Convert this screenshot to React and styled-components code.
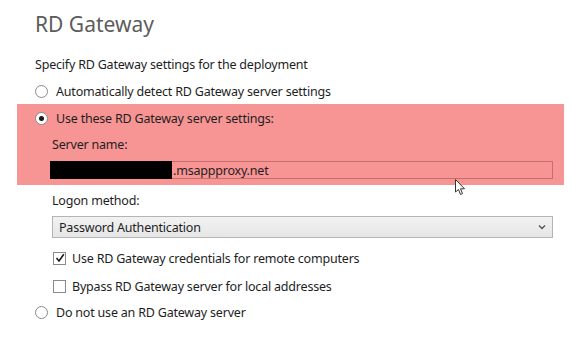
import React from 'react';
import styled, { createGlobalStyle } from 'styled-components';

const GlobalStyle = createGlobalStyle`
    body {
        margin: 0;
        background: #ffffff;
        font-family: "Segoe UI", "Noto Sans", "Open Sans", sans-serif;
        color: #1e1e1e;
    }
`;

const Page = styled.div`
    position: relative;
    width: 571px;
    height: 343px;
    overflow: hidden;
    padding-top: 10px;
    box-sizing: border-box;
`;

const Title = styled.h1`
    margin: 0 0 0 35px;
    height: 28px;
    line-height: 28px;
    font-size: 21px;
    font-weight: 400;
    color: #5c5c5c;
`;

const Text = styled.div`
    margin: ${(p) => p.top || 0}px 0 0 ${(p) => p.left || 0}px;
    height: 20px;
    line-height: 20px;
    font-size: 12.5px;
    letter-spacing: -0.2px;
`;

const Row = styled.label`
    display: flex;
    align-items: center;
    gap: ${(p) => p.gap || 8}px;
    margin: ${(p) => p.top || 0}px 0 0 ${(p) => p.left || 0}px;
    height: 20px;
    font-size: 12.5px;
    letter-spacing: -0.2px;
`;

const Radio = styled.span`
    width: 11px;
    height: 11px;
    border-radius: 50%;
    border: 1px solid #8a8a8a;
    background: #fff;
    display: flex;
    align-items: center;
    justify-content: center;
    flex-shrink: 0;

    &::after {
        content: '';
        width: 5px;
        height: 5px;
        border-radius: 50%;
        background: #1a1a1a;
        display: ${(p) => (p.checked ? 'block' : 'none')};
    }
`;

const Box = styled.span`
    width: 11px;
    height: 11px;
    border: 1px solid #8a8a8a;
    background: #fff;
    display: flex;
    align-items: center;
    justify-content: center;
    flex-shrink: 0;
`;

const Highlight = styled.div`
    margin: 3px 0 0 17px;
    width: 547px;
    padding: 4px 0 6px 18px;
    box-sizing: border-box;
    background: #f79595;
`;

const Input = styled.div`
    position: relative;
    margin: 6px 0 0 15px;
    width: 503px;
    height: 18px;
    box-sizing: border-box;
    border: 1px solid #c56e6e;
    display: flex;
    align-items: center;
    padding-left: 122px;
    font-size: 12.5px;
    letter-spacing: -0.2px;
`;

const Redacted = styled.span`
    position: absolute;
    left: -1px;
    top: -1px;
    width: 122px;
    height: 18px;
    background: #000;
`;

const Select = styled.div`
    margin: 5px 0 0 52px;
    width: 501px;
    height: 22px;
    box-sizing: border-box;
    border: 1px solid #b4b4b4;
    background: linear-gradient(#f2f2f2, #e6e6e6);
    display: flex;
    align-items: center;
    justify-content: space-between;
    padding: 0 6px 0 6px;
    font-size: 12.5px;
    letter-spacing: -0.2px;
`;

const Cursor = styled.svg`
    position: absolute;
    left: 455px;
    top: 179px;
`;

export default function App() {
    return (
        <Page>
            <GlobalStyle />
            <Title>RD Gateway</Title>
            <Text top={17} left={35}>Specify RD Gateway settings for the deployment</Text>
            <Row top={6} left={35}>
                <Radio />
                Automatically detect RD Gateway server settings
            </Row>
            <Highlight>
                <Row>
                    <Radio checked />
                    Use these RD Gateway server settings:
                </Row>
                <Text top={7} left={17}>Server name:</Text>
                <Input>
                    <Redacted />
                    .msappproxy.net
                </Input>
            </Highlight>
            <Text top={6} left={52}>Logon method:</Text>
            <Select>
                Password Authentication
                <svg width="8" height="6" viewBox="0 0 8 6">
                    <path d="M1 1.5 L4 4.5 L7 1.5" fill="none" stroke="#555" strokeWidth="1.4" />
                </svg>
            </Select>
            <Row top={10} left={53} gap={6}>
                <Box>
                    <svg width="10" height="10" viewBox="0 0 10 10">
                        <path d="M1.5 5 L4 8 L8.8 1.2" fill="none" stroke="#1a1a1a" strokeWidth="1.6" />
                    </svg>
                </Box>
                Use RD Gateway credentials for remote computers
            </Row>
            <Row top={8} left={53} gap={6}>
                <Box />
                Bypass RD Gateway server for local addresses
            </Row>
            <Row top={6} left={35}>
                <Radio />
                Do not use an RD Gateway server
            </Row>
            <Cursor width="12" height="18" viewBox="0 0 12 18">
                <path d="M0.5 0.5 L0.5 13 L3.5 10.5 L5.5 15.5 L7.5 14.5 L5.5 9.8 L9.5 9.8 Z" fill="#fff" stroke="#333" strokeWidth="1" />
            </Cursor>
        </Page>
    );
}
